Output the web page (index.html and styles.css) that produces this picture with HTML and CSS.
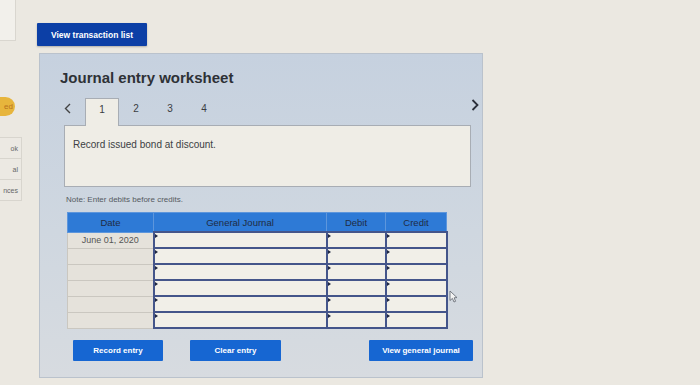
FILE: index.html
```html
<!DOCTYPE html>
<html lang="en">
  <head>
    <meta charset="UTF-8" />
    <meta name="viewport" content="width=device-width, initial-scale=1.0" />
    <title>Journal entry worksheet</title>
    <link rel="stylesheet" href="styles.css">
  </head>
  <body>
    <aside class="sidebar">
      <div class="side-top"></div>
      <div class="side-badge">ed</div>
      <ul class="side-list">
        <li>ok</li>
        <li>al</li>
        <li>nces</li>
      </ul>
    </aside>

    <main class="main">
      <button class="btn btn-dark">View transaction list</button>

      <div class="panel">
        <h1 class="title">Journal entry worksheet</h1>

        <!-- Tabs -->
        <div class="tabs">
          <span class="chev chev-left">
            <svg width="7" height="11" viewBox="0 0 7 11"><polyline points="6,1 1.5,5.5 6,10" fill="none" stroke="#444" stroke-width="1.4"/></svg>
          </span>
          <span class="tab active">1</span>
          <span class="tab">2</span>
          <span class="tab">3</span>
          <span class="tab">4</span>
          <span class="chev chev-right">
            <svg width="8" height="12" viewBox="0 0 8 12"><polyline points="1.5,1 6.5,6 1.5,11" fill="none" stroke="#2b2f3a" stroke-width="1.8"/></svg>
          </span>
        </div>

        <div class="task">Record issued bond at discount.</div>

        <p class="note">Note: Enter debits before credits.</p>

        <!-- Journal table -->
        <table class="journal">
          <tr>
            <th class="c-date">Date</th>
            <th class="c-gj">General Journal</th>
            <th class="c-dr">Debit</th>
            <th class="c-cr">Credit</th>
          </tr>
          <tr><td class="date">June 01, 2020</td><td class="cell"></td><td class="cell"></td><td class="cell"></td></tr>
          <tr><td class="date"></td><td class="cell"></td><td class="cell"></td><td class="cell"></td></tr>
          <tr><td class="date"></td><td class="cell"></td><td class="cell"></td><td class="cell"></td></tr>
          <tr><td class="date"></td><td class="cell"></td><td class="cell"></td><td class="cell"></td></tr>
          <tr><td class="date"></td><td class="cell"></td><td class="cell"></td><td class="cell"></td></tr>
          <tr><td class="date"></td><td class="cell"></td><td class="cell"></td><td class="cell"></td></tr>
        </table>

        <!-- Buttons -->
        <div class="actions">
          <button class="btn btn-record">Record entry</button>
          <button class="btn btn-clear">Clear entry</button>
          <button class="btn btn-view">View general journal</button>
        </div>

        <svg class="cursor" width="9" height="13" viewBox="0 0 9 13"><path d="M1 1 L1 10.5 L3.4 8.4 L5 12 L6.6 11.3 L5.1 7.8 L8 7.6 Z" fill="#f4f4f4" stroke="#6a6f78" stroke-width="0.9" stroke-linejoin="round"/></svg>
      </div>
    </main>
  </body>
</html>
```

FILE: styles.css
```css
body {
  margin: 0;
  padding: 0;
  display: flex;
  align-items: flex-start;
  min-height: 385px;
  background-color: #ebe8e1;
  font-family: "Liberation Sans", Arial, sans-serif;
  color: #333;
  overflow: hidden;
}
.sidebar {
  width: 22px;
  flex: none;
}
.side-top {
  width: 15px;
  height: 40px;
  background-color: #f2f0eb;
  border-right: 1px solid #d9d6cf;
  border-bottom: 1px solid #d9d6cf;
}
.side-badge {
  margin-top: 56px;
  width: 15px;
  height: 19px;
  line-height: 19px;
  background-color: #e7b53c;
  border-radius: 0 10px 10px 0;
  color: #b8721c;
  font-size: 8px;
  text-align: right;
  padding-right: 2px;
  box-sizing: border-box;
}
.side-list {
  list-style: none;
  margin: 22px 0 0;
  padding: 0;
}
.side-list li {
  width: 22px;
  height: 22px;
  line-height: 22px;
  border: 1px solid #d8d5ce;
  border-left: none;
  margin-top: -1px;
  font-size: 7px;
  color: #666;
  text-align: right;
  padding-right: 3px;
  box-sizing: border-box;
  background-color: #ece9e3;
}
.main {
  margin-left: 15px;
  padding-top: 23px;
}
.btn {
  border: none;
  border-radius: 1px;
  color: white;
  font-family: "Liberation Sans", Arial, sans-serif;
  font-weight: bold;
  font-size: 8px;
  height: 21px;
  padding: 0;
  cursor: pointer;
}
.btn-dark {
  display: block;
  width: 110px;
  height: 23px;
  font-size: 8.5px;
  background-color: #0c3fa6;
  box-shadow: 0 1px 2px rgba(0, 0, 0, 0.25);
}
.panel {
  position: relative;
  margin: 7px 0 0 2px;
  width: 444px;
  height: 325px;
  box-sizing: border-box;
  padding: 15px 11px 0 24px;
  background: linear-gradient(#c6d1df, #cfd7e0 55%, #d7dbe0);
  border: 1px solid #bac2cc;
}
.title {
  margin: 0 0 11px -4px;
  font-size: 15px;
  line-height: 18px;
  font-weight: bold;
  color: #2e3136;
}
.tabs {
  display: flex;
  align-items: flex-end;
  height: 27px;
  position: relative;
  z-index: 1;
}
.chev {
  display: flex;
  height: 27px;
  box-sizing: border-box;
  align-items: flex-start;
}
.chev-left {
  width: 21px;
  padding-top: 5px;
}
.chev-right {
  margin-left: auto;
  margin-right: -8px;
  padding-top: 1px;
}
.tab {
  width: 34px;
  height: 27px;
  box-sizing: border-box;
  padding-top: 5px;
  font-size: 10px;
  line-height: 11px;
  text-align: center;
  color: #3a3d42;
}
.tab.active {
  background-color: #efede6;
  border: 1px solid #a8adb4;
  border-bottom: none;
  height: 28px;
  margin-bottom: -1px;
}
.task {
  height: 62px;
  box-sizing: border-box;
  padding: 13px 8px;
  background-color: #efede6;
  border: 1px solid #a8adb4;
  font-size: 10px;
  line-height: 12px;
  color: #3c3f44;
}
.note {
  margin: 8px 0 0 2px;
  font-size: 8px;
  line-height: 10px;
  color: #555a60;
}
.journal {
  margin: 7px 0 0 3px;
  border-collapse: collapse;
  width: 375px;
  table-layout: fixed;
}
.journal th {
  height: 18px;
  padding: 0;
  background-color: #2e7ad6;
  border: 1px solid #5d96dc;
  color: #1f2c44;
  font-weight: normal;
  font-size: 9.5px;
  vertical-align: middle;
}
.c-date { width: 85px; }
.c-gj { width: 172px; }
.c-dr { width: 58px; }
.c-cr { width: 60px; }
.journal td {
  height: 14px;
  padding: 0;
  font-size: 9px;
}
.journal td.date {
  background-color: #e5e2db;
  border: 1px solid #cac7c0;
  text-align: center;
  color: #555;
}
.journal td.cell {
  position: relative;
  background-color: #f1efe8;
  border: 2px solid #44558a;
}
.journal td.cell::before {
  content: "";
  position: absolute;
  left: 0;
  top: 1px;
  border-left: 3px solid #1d2540;
  border-top: 2px solid transparent;
  border-bottom: 2px solid transparent;
}
.actions {
  display: flex;
  margin: 11px -2px 0 9px;
}
.btn-record,
.btn-clear,
.btn-view {
  background-color: #1666d2;
}
.btn-record { width: 90px; }
.btn-clear { width: 91px; margin-left: 27px; }
.btn-view { width: 104px; margin-left: auto; }
.cursor {
  position: absolute;
  left: 409px;
  top: 236px;
}
```
